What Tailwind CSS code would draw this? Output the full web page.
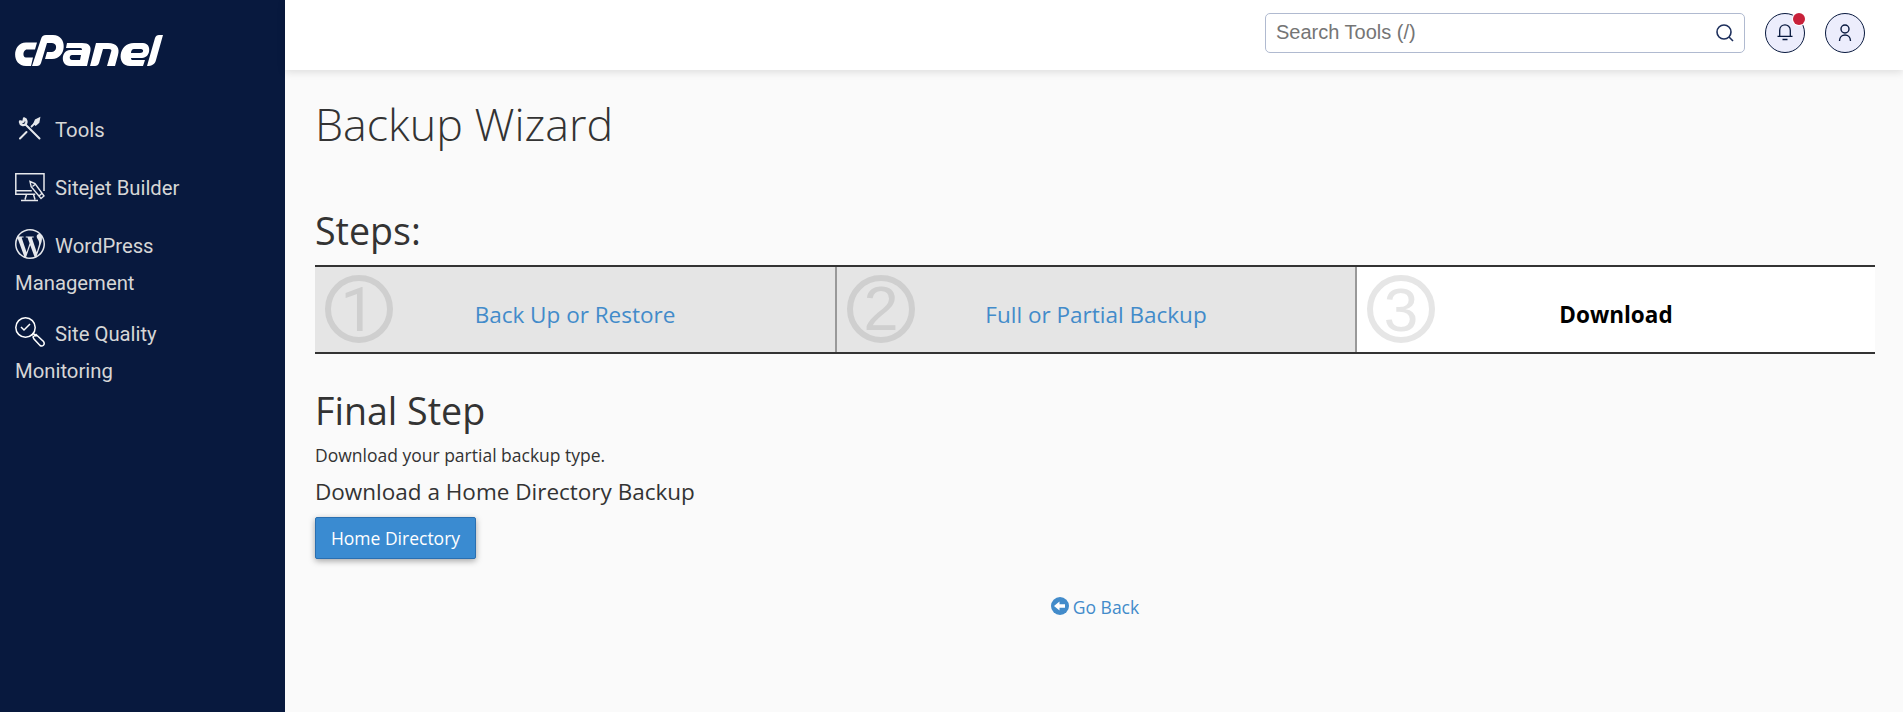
<!DOCTYPE html>
<html lang="en">
<head>
<meta charset="utf-8">
<title>cPanel - Backup Wizard</title>
<script src="https://cdn.jsdelivr.net/npm/@tailwindcss/browser@4"></script>
</head>
<body class="h-[712px] overflow-hidden flex bg-[#fafafa] text-[#333] font-['Open_Sans',sans-serif]">
<aside class="w-[285px] h-full shrink-0 bg-[#08193e] pl-[15px] font-['Roboto',sans-serif] text-[#d6d6d6]">
  <svg class="mt-[35px] block" width="148" height="31" viewBox="0 0 148 31" fill="#fff">
    <path d="M11 7.500h11l-2 7h-8c-4 0-5 8-1 8h7l-2 8.500h-5C-4 31-3 7.500 11 7.500z"/>
    <path fill-rule="evenodd" d="M26 4Q27 0 31 0h7c15 0 14 24-1 24h-7l2-7h5c5 0 6-9 0-9h-5l-6 20q-1 3-4 3h-5z"/>
    <path fill-rule="evenodd" d="M52 8h15c7 0 10 3 8 10l-3 13H55c-10 0-9-16 0-16h12c0-2-1-2-3-2H51zM57 20c-3 0-3 5 0 5h8l1-5z"/>
    <path d="M81 8h12c9 0 12 5 10 12l-3 11h-8l4-14c1-2 0-3-2-3h-6l-4 14q-1 3-4 3h-5z"/>
    <path fill-rule="evenodd" d="M119 8h9c9 0 8 15-1 15h-11c0 2 1 2 2 2h12l-2 6h-13c-14 0-12-23 4-23zM119 14c-2 0-3 2-3 4h9c4 0 4-4 1-4z"/>
    <path d="M140 3q1-3 4-3h4l-7 25c-1 4-4 6-9 6z"/>
  </svg>
  <nav class="text-[20.3px] leading-[37px]">
    <a class="mt-[45px] h-[37px] flex items-center">
      <svg class="w-[30px] h-[30px] mr-[10px] mb-px" viewBox="0 0 30 30" fill="none" stroke="#e6e8ec" stroke-linecap="round"><path stroke-width="2" d="M10.500 10.500L24.500 24.500M5 24.500l6.500-6.500"/><path stroke-width="2.400" d="M5 8c.5 3.500 3.500 3.500 5.500 2.500 1.500-2 1.500-5-1.500-6M5 7.500l2.500.5M9 5l-.5 2.500"/><path stroke-width="1.800" d="M16.500 12.500l3-3"/><path fill="#e6e8ec" stroke-width="1.400" d="M19 9.500l1.500-3.500 4-2-.8 4.500-3 2.500z"/></svg>
      <span class="pt-[2px]">Tools</span></a>
    <a class="mt-[21px] h-[37px] flex items-center">
      <svg class="w-[30px] h-[30px] mr-[10px] mb-[2px]" viewBox="0 0 30 30" fill="none" stroke="#e6e8ec" stroke-width="1.500"><path d="M29 19V1.700H.8v20.500h19.500M.8 18.700h16M11.500 22.500l-1.500 5M18.500 22.500l1.500 5M6 28.500h17"/><path fill="#08193e" stroke-width="1.400" d="M15 9.500l5 2 9 12.500-3 2.500-9.800-11.700zM17.500 14.500l2.500-2M24 24l2.800-2.500"/></svg>
      <span class="pt-[2px]">Sitejet Builder</span></a>
    <a class="mt-[22px] block w-[170px]">
      <svg class="inline-block align-[-6px] w-[30px] h-[30px] mr-[5px]" viewBox="0 0 24 24" fill="#e6e8ec"><path d="M21.469 6.825c.84 1.537 1.318 3.300 1.318 5.175 0 3.979-2.156 7.456-5.363 9.325l3.295-9.527c.615-1.540.82-2.771.82-3.864 0-.405-.026-.78-.07-1.110m-7.981.105c.647-.03 1.232-.105 1.232-.105.582-.075.514-.930-.067-.899 0 0-1.755.135-2.880.135-1.064 0-2.850-.15-2.850-.15-.585-.03-.661.855-.075.885 0 0 .540.061 1.125.090l1.680 4.605-2.370 7.080L5.354 6.900c.649-.03 1.234-.1 1.234-.1.585-.075.516-.930-.065-.896 0 0-1.746.138-2.874.138-.2 0-.438-.008-.690-.015C4.911 3.150 8.235 1.215 12 1.215c2.809 0 5.365 1.072 7.286 2.833-.046-.003-.091-.009-.141-.009-1.060 0-1.812.923-1.812 1.914 0 .89.513 1.643 1.060 2.531.411.720.89 1.643.89 2.977 0 .915-.354 1.994-.821 3.479l-1.075 3.585-3.900-11.610.001.014zM12 22.784c-1.059 0-2.081-.153-3.048-.437l3.237-9.406 3.315 9.087c.024.053.050.101.078.149-1.120.393-2.325.609-3.582.609M1.211 12c0-1.564.336-3.050.935-4.390L7.290 21.709C3.694 19.960 1.212 16.271 1.211 12M12 0C5.385 0 0 5.385 0 12s5.385 12 12 12 12-5.385 12-12S18.615 0 12 0"/></svg>
      <span>WordPress Management</span></a>
    <a class="mt-[14px] block w-[170px]">
      <svg class="inline-block align-[-6px] w-[30px] h-[30px] mr-[5px]" viewBox="0 0 30 30" fill="none" stroke="#fff" stroke-width="1.500"><circle cx="10.500" cy="10.500" r="9.700"/><path d="M6 10l3 3 6-6M16.500 18.500l2-2 3 3M18 20l3-2.500 7.500 7c2 3-1 5.500-3.500 4l-6-6.500z"/></svg>
      <span>Site Quality Monitoring</span></a>
  </nav>
</aside>
<div class="flex-1 min-w-0">
  <header class="h-[70px] bg-white shadow-[0_2px_8px_rgba(0,0,0,0.12)] flex justify-end pt-[13px] pr-[38px]">
    <div class="w-[480px] h-10 border border-[#b0bad0] rounded-[5px] bg-white flex items-center justify-between pl-[10px] pr-[10px] font-['Liberation_Sans',sans-serif] text-[20px] text-[#757575]">
      <span class="-mt-[2px]">Search Tools (/)</span>
      <svg width="18" height="18" viewBox="0 0 18 18" fill="none" stroke="#1d2f5c" stroke-width="1.600"><circle cx="8" cy="8" r="7"/><path d="M13 13l4 4"/></svg>
    </div>
    <div class="relative ml-5 size-10 rounded-full border border-[#08193e] bg-[#ecedfc] flex items-center justify-center">
      <svg class="-mt-[2px]" width="16" height="18" viewBox="0 0 16 18" fill="none" stroke="#08193e" stroke-width="1.300"><path d="M.5 13.300h15M2.700 13V7.200C2.700 0 13.300 0 13.300 7.200V13M5.500 16.500h5"/></svg>
      <span class="absolute -top-px left-[27px] size-[12px] rounded-full bg-[#c8213a] ring-1 ring-white"></span>
    </div>
    <div class="ml-5 size-10 rounded-full border border-[#08193e] bg-[#ecedfc] flex items-center justify-center">
      <svg width="14" height="18" viewBox="0 0 14 18" fill="none" stroke="#08193e" stroke-width="1.400"><circle cx="7" cy="5" r="4"/><path d="M1.500 17c0-8 11-8 11 0"/></svg>
    </div>
  </header>
  <main class="pl-[30px] pr-7">
    <h1 class="mt-[25px] text-[44.8px] leading-[58px] font-light">Backup Wizard</h1>
    <h2 class="mt-[55px] text-[37.6px] leading-[46px]">Steps:</h2>
    <div class="mt-[11px] h-[89px] border-y-2 border-[#333] grid grid-cols-[520px_522px_518px] text-[22.5px] text-[#428bca]">
      <div class="bg-[#e5e5e5] grid">
        <svg class="[grid-area:1/1] ml-[10px] mt-2 overflow-visible" width="68" height="68" viewBox="0 0 68 68"><circle cx="34" cy="34" r="31" fill="none" stroke="#cfcfcf" stroke-width="6"/><text x="15.500" y="56" font-family="Roboto" font-size="62" fill="#cfcfcf">1</text></svg>
        <span class="[grid-area:1/1] text-center pt-[32px] leading-8">Back Up or Restore</span>
      </div>
      <div class="bg-[#e5e5e5] border-x-2 border-[#999] grid">
        <svg class="[grid-area:1/1] ml-[10px] mt-2 overflow-visible" width="68" height="68" viewBox="0 0 68 68"><circle cx="34" cy="34" r="31" fill="none" stroke="#cfcfcf" stroke-width="6"/><text x="34" y="54.500" text-anchor="middle" font-family="Liberation Sans" font-size="63" fill="#cfcfcf">2</text></svg>
        <span class="[grid-area:1/1] text-center pt-[32px] leading-8">Full or Partial Backup</span>
      </div>
      <div class="bg-white grid">
        <svg class="[grid-area:1/1] ml-[10px] mt-2 overflow-visible" width="68" height="68" viewBox="0 0 68 68"><circle cx="34" cy="34" r="31" fill="none" stroke="#e6e6e6" stroke-width="6"/><text x="34" y="55.500" text-anchor="middle" font-family="Liberation Sans" font-size="62" fill="#e6e6e6">3</text></svg>
        <span class="[grid-area:1/1] text-center pt-[32px] leading-8 font-bold text-black">Download</span>
      </div>
    </div>
    <h2 class="mt-[34px] text-[37.6px] leading-[46px]">Final Step</h2>
    <p class="mt-[8px] text-[17.5px] leading-[26px]">Download your partial backup type.</p>
    <h3 class="mt-[8px] text-[22.5px] leading-[32px]">Download a Home Directory Backup</h3>
    <button class="mt-[9px] block w-[161px] h-[42px] rounded-[2px] border border-[#2a6fb0] bg-[#3a8bd1] text-white text-[17.5px] shadow-[0_2px_6px_rgba(0,0,0,0.35)]">Home Directory</button>
    <a class="mt-[35px] flex items-center justify-center gap-[4px] text-[17.5px] leading-[26px] text-[#428bca]">
      <svg class="-mt-[3px]" width="18" height="18" viewBox="0 0 18 18"><circle cx="9" cy="9" r="9" fill="#428bca"/><path fill="#fff" d="M3 9l5.500-4.500v2.700H14v3.600H8.500v2.700z"/></svg>
      <span>Go Back</span></a>
  </main>
</div>
</body>
</html>
